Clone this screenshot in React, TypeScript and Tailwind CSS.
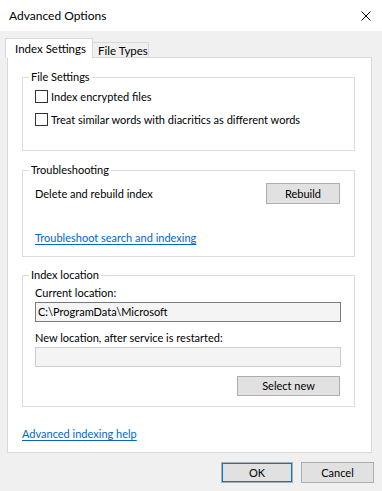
import React from "react";

const font = { fontFamily: 'Lato, "Noto Sans", Arial, sans-serif' };

function Checkbox({ label }: { label: string }) {
  return (
    <div className="flex h-[17px] items-center">
      <div className="h-[13px] w-[13px] shrink-0 border border-[#333333] bg-white" />
      <span className="ml-[3px] whitespace-nowrap leading-[16px]">{label}</span>
    </div>
  );
}

function Group({ title, children, className }: { title: string; children: React.ReactNode; className?: string }) {
  return (
    <fieldset className={"border border-[#dcdcdc] pl-[12px] pr-[13px] " + (className ?? "")}>
      <legend className="ml-[-6px] whitespace-nowrap px-[2px] leading-[16px]">{title}</legend>
      {children}
    </fieldset>
  );
}

function Button({ children, className }: { children: React.ReactNode; className?: string }) {
  return (
    <div
      className={
        "flex items-center justify-center whitespace-nowrap border border-[#adadad] bg-[#e1e1e1] leading-[16px] " +
        (className ?? "")
      }
    >
      {children}
    </div>
  );
}

export default function App() {
  return (
    <div className="flex h-[491px] w-[382px] flex-col overflow-hidden text-[11px] text-black" style={font}>
      {/* Title bar */}
      <div className="flex h-[31px] items-center justify-between bg-white pl-[9px] pr-[11px]">
        <span className="whitespace-nowrap text-[12px] leading-[16px]">Advanced Options</span>
        <svg width="10" height="10" viewBox="0 0 10 10">
          <path d="M0.5 0.5 L9.5 9.5 M9.5 0.5 L0.5 9.5" stroke="#000" strokeWidth="1" />
        </svg>
      </div>

      {/* Body */}
      <div className="flex flex-1 flex-col bg-[#f0f0f0] pt-[7px]">
        {/* Tabs */}
        <div className="flex h-[20px] items-end pl-[5px]">
          <div className="relative z-10 flex h-[20px] w-[88px] items-start whitespace-nowrap border border-b-0 border-[#d9d9d9] bg-white pl-[9px] pt-[2px] text-[11.5px] leading-[16px]">
            Index Settings
          </div>
          <div className="ml-[-1px] flex h-[16px] w-[57px] items-center whitespace-nowrap border border-b-0 border-[#d9d9d9] bg-[#f0f0f0] pl-[5px] text-[11.5px] leading-[14px]">
            File Types
          </div>
        </div>

        {/* Panel */}
        <div className="mt-[-1px] ml-[7px] mr-[10px] flex flex-col border border-[#d9d9d9] bg-white pl-[14px] pr-[16px] pt-[11px] pb-[10px]">
          <Group title="File Settings" className="pb-[22px]">
            <div className="mt-[3px] flex flex-col gap-[6px]">
              <Checkbox label="Index encrypted files" />
              <Checkbox label="Treat similar words with diacritics as different words" />
            </div>
          </Group>

          <Group title="Troubleshooting" className="mt-[11px] pb-[10px]">
            <div className="mt-[5px] flex h-[21px] items-center justify-between">
              <span className="whitespace-nowrap leading-[16px]">Delete and rebuild index</span>
              <Button className="mr-[1px] h-[21px] w-[74px]">Rebuild</Button>
            </div>
            <div className="mt-[26px] leading-[16px]">
              <span className="whitespace-nowrap text-[#0066cc] underline underline-offset-2">
                Troubleshoot search and indexing
              </span>
            </div>
          </Group>

          <Group title="Index location" className="mt-[10px] pb-[10px]">
            <div className="mt-[2px] whitespace-nowrap leading-[16px]">Current location:</div>
            <div className="mt-[1px] flex h-[20px] items-center whitespace-nowrap border border-[#7a7a7a] bg-[#f4f4f4] pl-[2px] leading-[16px]">
              C:\ProgramData\Microsoft
            </div>
            <div className="mt-[8px] whitespace-nowrap leading-[16px]">New location, after service is restarted:</div>
            <div className="mt-[1px] h-[20px] border border-[#cccccc] bg-[#f4f4f4]" />
            <div className="mt-[9px] flex justify-end">
              <Button className="mr-[1px] h-[20px] w-[103px]">Select new</Button>
            </div>
          </Group>

          <div className="mt-[19px] leading-[16px]">
            <span className="whitespace-nowrap text-[#0066cc] underline underline-offset-2">Advanced indexing help</span>
          </div>
        </div>

        {/* Footer */}
        <div className="mt-[9px] flex justify-end gap-[8px] pr-[8px]">
          <Button className="h-[21px] w-[72px] border-[#0078d7] shadow-[inset_0_0_0_1px_#0078d7]">OK</Button>
          <Button className="h-[21px] w-[73px]">Cancel</Button>
        </div>
      </div>
    </div>
  );
}
